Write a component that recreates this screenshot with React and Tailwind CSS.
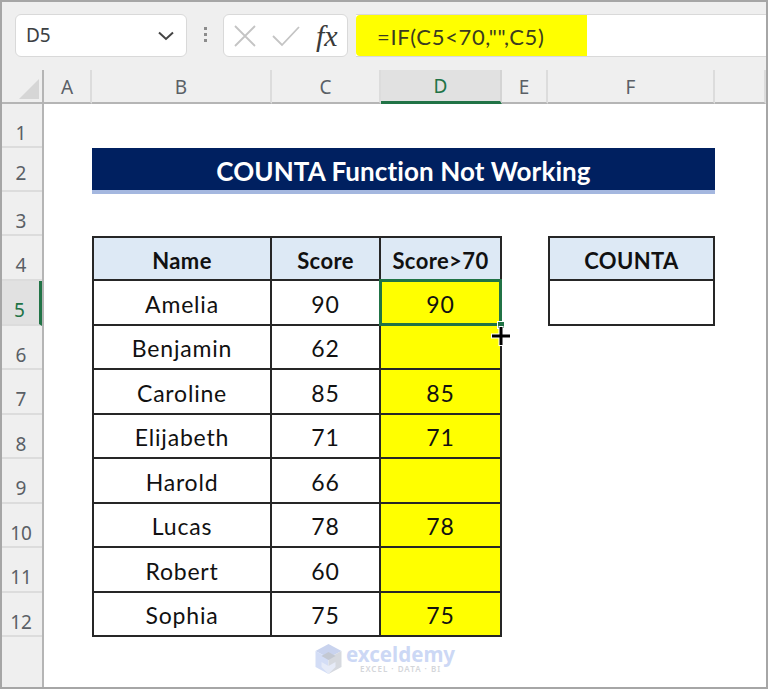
import React from 'react';

const columns = [
  { label: 'A' },
  { label: 'B' },
  { label: 'C' },
  { label: 'D', active: true },
  { label: 'E' },
  { label: 'F' },
  { label: '' },
];

const scores = [
  { name: 'Amelia', score: 90, result: 90 },
  { name: 'Benjamin', score: 62, result: '' },
  { name: 'Caroline', score: 85, result: 85 },
  { name: 'Elijabeth', score: 71, result: 71 },
  { name: 'Harold', score: 66, result: '' },
  { name: 'Lucas', score: 78, result: 78 },
  { name: 'Robert', score: 60, result: '' },
  { name: 'Sophia', score: 75, result: 75 },
];

const rowNumbers = [1, 2, 3, 4, 5, 6, 7, 8, 9, 10, 11, 12];
const cellBase = 'flex items-center justify-center border-r-2 border-b-2 border-[#262626] pt-[3px]';
const bodyText = 'text-[23px] tracking-[0.8px] text-[#111]';
const headText = 'text-[22px] tracking-[0.4px] font-bold text-[#111]';

const RowHeader = ({ number }) => (
  <div
    className={`flex items-center justify-center border-b-2 border-[#dcdcdc] pr-[2px] text-[19px] ${
      number === 2 ? 'pt-[8px]' : 'pt-[16px]'
    } ${
      number === 5
        ? 'bg-[#e1e1e1] text-[#217346] border-r-[3px] border-r-[#217346]'
        : 'bg-[#efefef] text-[#5a5f66]'
    }`}
  >
    {number}
  </div>
);

const Watermark = () => (
  <div className="absolute left-[312px] top-[641px] flex items-start gap-[3px]">
    <svg width="29" height="32" viewBox="0 0 28 32">
      <path d="M14 1 L27 8 L14 15 L1 8 Z" fill="#c9d3ee" />
      <path d="M1 8 L14 15 L14 31 L1 24 Z" fill="#d3ddf6" />
      <path d="M27 8 L14 15 L14 31 L27 24 Z" fill="#d6d9df" />
      <path d="M14 9 L21 13 L14 17 L7 13 Z" fill="#c3c8d2" />
      <path d="M7 19 L14 23 L21 19 L21 24 L14 31 L7 24 Z" fill="#e6ebf8" />
    </svg>
    <div className="flex flex-col items-center pt-[2px] font-['Noto_Sans',sans-serif]">
      <span className="text-[20.5px] leading-[19px] font-bold text-[#ccd8f5]">exceldemy</span>
      <span className="text-[8px] leading-[10px] font-semibold tracking-[1px] text-[#d4d6da]">
        EXCEL · DATA · BI
      </span>
    </div>
  </div>
);

const App = () => {
  return (
    <div className="relative flex h-[689px] w-[768px] flex-col overflow-hidden border-2 border-[#a6a6a6] bg-[#efefef] font-['Lato',sans-serif]">
      {/* Formula bar */}
      <div className="flex h-[68px] shrink-0 items-start pl-[13px] pt-3">
        <div className="flex h-[43px] w-[172px] items-center justify-between rounded-md border border-[#d9d9d9] bg-white pl-[10px] pr-[11px] font-['Noto_Sans',sans-serif] text-[19px] text-[#3c4043]">
          D5
          <svg width="18" height="10" viewBox="0 0 18 10" fill="none" stroke="#444" strokeWidth="2">
            <path d="M2 1.5 L9 8 L16 1.5" />
          </svg>
        </div>
        <div className="flex w-[36px] flex-col items-center gap-[3px] pt-[13px]">
          <span className="h-[3px] w-[3px] bg-[#8c8c8c]" />
          <span className="h-[3px] w-[3px] bg-[#8c8c8c]" />
          <span className="h-[3px] w-[3px] bg-[#8c8c8c]" />
        </div>
        <div className="flex h-[43px] w-[125px] items-center rounded-md border border-[#d9d9d9] bg-white pl-[9px]">
          <svg width="24" height="24" viewBox="0 0 24 24" fill="none" stroke="#c4c4c4" strokeWidth="1.8">
            <path d="M2 2 L22 22 M22 2 L2 22" />
          </svg>
          <svg className="ml-[14px]" width="30" height="22" viewBox="0 0 30 22" fill="none" stroke="#c4c4c4" strokeWidth="1.8">
            <path d="M2 11 L11 20 L28 2" />
          </svg>
          <span className="ml-[15px] font-['Liberation_Serif',serif] text-[30px] italic leading-none text-[#3a3a3a]">fx</span>
        </div>
        <div className="ml-2 flex h-[43px] flex-1 items-stretch border-y border-[#d9d9d9] bg-white">
          <div className="flex w-[231px] items-center rounded-l-sm bg-[#ffff00] pl-[21px] pt-[2px] text-[22px] tracking-[0.65px] text-[#3b3b20]">
            =IF(C5&lt;70,"",C5)
          </div>
        </div>
      </div>

      {/* Sheet */}
      <div className="grid flex-1 grid-cols-[42px_48px_180px_109px_121px_46px_167px_1fr] grid-rows-[34px_44px_44px_44px_45px_45px_44px_45px_44px_45px_44px_45px_44px_1fr]">
        {/* Column headers */}
        <div className="flex items-end justify-end border-r-2 border-b-2 border-[#b5b5b5] p-[3px]">
          <svg width="20" height="20" viewBox="0 0 20 20">
            <path d="M20 0 L20 20 L0 20 Z" fill="#d6d6d6" />
          </svg>
        </div>
        {columns.map((col, i) => (
          <div
            key={i}
            className={`flex items-center justify-center border-r-2 pt-[2px] font-['Noto_Sans',sans-serif] text-[19px] ${
              col.active
                ? 'border-r-[#d4d4d4] border-b-[3px] border-b-[#217346] bg-[#e1e1e1] text-[#217346]'
                : 'border-r-[#dcdcdc] border-b-2 border-b-[#b5b5b5] text-[#5a5f66]'
            }`}
          >
            {col.label}
          </div>
        ))}

        {/* Row headers */}
        <div className="col-start-1 row-start-2 row-end-[14] grid grid-rows-subgrid border-r-2 border-[#b5b5b5] font-['Noto_Sans',sans-serif]">
          {rowNumbers.map((n) => (
            <RowHeader key={n} number={n} />
          ))}
        </div>
        <div className="col-start-1 row-start-[14] border-r-2 border-[#b5b5b5] bg-[#efefef]" />

        {/* Cells background */}
        <div className="col-start-2 col-end-9 row-start-2 row-end-[15] bg-white" />

        {/* Title */}
        <div className="z-10 col-start-3 col-end-8 row-start-3 -mb-[2px] flex items-center justify-center border-b-[4px] border-[#a4b7df] bg-[#002060] pt-[4px] text-[26px] font-bold tracking-[0.1px] text-white">
          COUNTA Function Not Working
        </div>

        {/* Table header */}
        {['Name', 'Score', 'Score>70'].map((h, i) => (
          <div
            key={h}
            style={{ gridColumnStart: i + 3 }}
            className={`${cellBase} ${headText} z-10 row-start-5 border-t-2 bg-[#dde9f5] ${i === 0 ? 'border-l-2' : ''}`}
          >
            {h}
          </div>
        ))}

        {/* Table rows */}
        {scores.map((row, r) => (
          <React.Fragment key={row.name}>
            <div style={{ gridRowStart: r + 6 }} className={`${cellBase} ${bodyText} z-10 col-start-3 border-l-2`}>
              {row.name}
            </div>
            <div style={{ gridRowStart: r + 6 }} className={`${cellBase} ${bodyText} z-10 col-start-4`}>
              {row.score}
            </div>
            <div
              style={{ gridRowStart: r + 6 }}
              className={`${cellBase} ${bodyText} relative col-start-5 bg-[#ffff00] ${r === 0 ? 'z-20' : 'z-10'}`}
            >
              {row.result}
              {r === 0 && (
                <>
                  <div className="absolute -left-[2px] -top-[2px] -right-[2px] -bottom-[2px] border-[3px] border-[#217346]" />
                  <div className="absolute -bottom-[5px] -right-[5px] h-[8px] w-[8px] border border-white bg-[#217346]" />
                  <svg className="absolute -right-[13px] -bottom-[24px]" width="24" height="24" viewBox="0 0 24 24">
                    <path d="M12 2 V22 M2 12 H22" stroke="#fff" strokeWidth="5" />
                    <path d="M12 3 V21 M3 12 H21" stroke="#000" strokeWidth="3" />
                  </svg>
                </>
              )}
            </div>
          </React.Fragment>
        ))}

        {/* COUNTA box */}
        <div className={`${cellBase} ${headText} z-10 col-start-7 row-start-5 border-l-2 border-t-2 bg-[#dde9f5]`}>
          COUNTA
        </div>
        <div className={`${cellBase} z-10 col-start-7 row-start-6 border-l-2 bg-white`} />
      </div>

      <Watermark />
    </div>
  );
};

export default App;
